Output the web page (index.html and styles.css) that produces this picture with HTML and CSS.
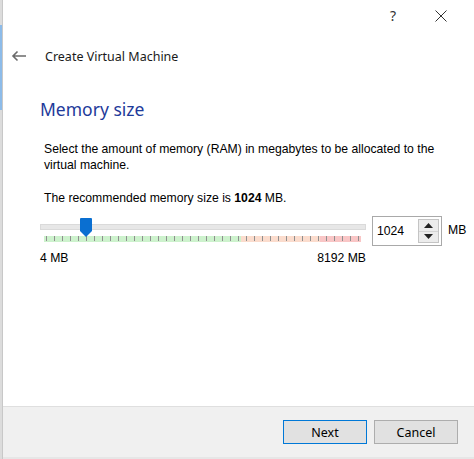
FILE: index.html
```html
<!DOCTYPE html>
<html>
<head>
<meta charset="utf-8">
<link rel="stylesheet" href="styles.css">
</head>
<body>
<div class="screen">
  <div class="behind"><div class="behind-blue"></div></div>
  <div class="dialog">
    <div class="titlebar">
      <span class="tb-help">?</span>
      <svg class="tb-close" width="12" height="12" viewBox="0 0 12 12"><path d="M0.5 0.5 L11.5 11.5 M11.5 0.5 L0.5 11.5" stroke="#333" stroke-width="1" fill="none"/></svg>
    </div>
    <div class="header">
      <svg class="back" width="16" height="12" viewBox="0 0 16 12"><path d="M15 6 H2 M6.5 1.5 L2 6 L6.5 10.5" stroke="#6b6b6b" stroke-width="1.6" fill="none"/></svg>
      <span class="header-title">Create Virtual Machine</span>
    </div>
    <div class="content">
      <h1 class="page-title">Memory size</h1>
      <p class="desc">Select the amount of memory (RAM) in megabytes to be allocated to the virtual machine.</p>
      <p class="desc rec">The recommended memory size is <b>1024</b> MB.</p>
      <div class="mem-row">
        <div class="slider">
          <div class="track"></div>
          <svg class="thumb" width="12" height="19" viewBox="0 0 12 19"><path d="M1 0 H11 Q12 0 12 1 V13 L6 19 L0 13 V1 Q0 0 1 0 Z" fill="#0a6fd1"/></svg>
          <div class="ticks"></div>
          <div class="labels"><span>4 MB</span><span>8192 MB</span></div>
        </div>
        <div class="spin">
          <span class="spin-val">1024</span>
          <div class="spin-btns">
            <div class="spin-btn"><svg width="9" height="5" viewBox="0 0 9 5"><path d="M0 5 L4.5 0 L9 5 Z" fill="#222"/></svg></div>
            <div class="spin-btn spin-down"><svg width="9" height="5" viewBox="0 0 9 5"><path d="M0 0 L4.5 5 L9 0 Z" fill="#222"/></svg></div>
          </div>
        </div>
        <span class="unit">MB</span>
      </div>
    </div>
    <div class="footer">
      <button class="btn btn-default">Next</button>
      <button class="btn">Cancel</button>
    </div>
  </div>
</div>
</body>
</html>
```
FILE: styles.css
```css
html, body {
  margin: 0;
  padding: 0;
  background: #ffffff;
}
.screen {
  display: flex;
  width: 474px;
  height: 459px;
  overflow: hidden;
}
.behind {
  width: 2px;
  background: #dcdcdc;
  border-right: 1px solid #c8c8c8;
  flex: none;
}
.behind-blue {
  margin-top: 25px;
  height: 85px;
  background: #8cbbe9;
}
.dialog {
  flex: 1;
  min-width: 0;
  display: flex;
  flex-direction: column;
  background: #fff;
}
.titlebar {
  height: 32px;
  display: flex;
  align-items: center;
  justify-content: flex-end;
  padding-right: 27px;
  font-family: "Noto Sans", sans-serif;
}
.tb-help {
  font-size: 14px;
  color: #333;
  margin-right: 39px;
  margin-top: -1px;
}
.header {
  height: 48px;
  display: flex;
  align-items: center;
  padding-left: 8px;
}
.back {
  margin-right: 18px;
}
.header-title {
  font-family: "Noto Sans", sans-serif;
  font-size: 12.5px;
  color: #1a1a1a;
}
.content {
  flex: 1;
  padding-left: 37px;
}
.page-title {
  margin: 17px 0 0 0;
  font-family: "Noto Sans", sans-serif;
  font-weight: normal;
  font-size: 17.5px;
  color: #1e3a9a;
  line-height: 24px;
}
.desc {
  margin: 20px 0 0 4px;
  width: 400px;
  font-family: "Liberation Sans", Arial, sans-serif;
  font-size: 12.2px;
  line-height: 16px;
  color: #000;
}
.desc.rec {
  margin-top: 17px;
}
.mem-row {
  display: flex;
  align-items: flex-start;
  margin-top: 10px;
}
.slider {
  position: relative;
  width: 326px;
  height: 50px;
  flex: none;
}
.track {
  margin-top: 8px;
  height: 6px;
  background: #e7e7e7;
  border: 1px solid #dadada;
  box-sizing: border-box;
}
.thumb {
  position: absolute;
  left: 40px;
  top: 2px;
}
.ticks {
  margin: 6px 0 0 4px;
  width: 317px;
  height: 6px;
  background:
    repeating-linear-gradient(to right, #8f8f8f 0, #8f8f8f 1px, transparent 1px, transparent 8px) 2px 0 / 313px 5px no-repeat,
    linear-gradient(to right, #cdf2cd 0, #cdf2cd 197px, #fbdccd 197px, #fbdccd 276px, #f9c6c6 276px, #f9c6c6 100%);
}
.labels {
  display: flex;
  justify-content: space-between;
  margin-top: 9px;
  font-family: "Liberation Sans", Arial, sans-serif;
  font-size: 12.2px;
  color: #000;
}
.spin {
  margin-left: 6px;
  width: 70px;
  height: 30px;
  flex: none;
  box-sizing: border-box;
  border: 1px solid #a9a9a9;
  display: flex;
  align-items: center;
  justify-content: space-between;
  padding: 1px 2px 1px 4px;
}
.spin-val {
  font-family: "Liberation Sans", Arial, sans-serif;
  font-size: 12.2px;
  color: #000;
}
.spin-btns {
  width: 21px;
  height: 24px;
  box-sizing: border-box;
  border: 1px solid #c4c4c4;
  background: #ececec;
  display: flex;
  flex-direction: column;
}
.spin-btn {
  flex: 1;
  display: flex;
  align-items: center;
  justify-content: center;
}
.spin-down {
  border-top: 1px solid #d4d4d4;
}
.unit {
  margin-left: 6px;
  margin-top: 7px;
  font-family: "Liberation Sans", Arial, sans-serif;
  font-size: 12.2px;
  color: #000;
}
.footer {
  height: 50px;
  background: #f0f0f0;
  border-top: 1px solid #dfdfdf;
  border-bottom: 2px solid #e6e6e6;
  display: flex;
  align-items: center;
  justify-content: flex-end;
  gap: 7px;
  padding-right: 16px;
}
.btn {
  width: 84px;
  height: 24px;
  box-sizing: border-box;
  background: #e1e1e1;
  border: 1px solid #adadad;
  font-family: "Noto Sans", sans-serif;
  font-size: 12.5px;
  color: #000;
  padding: 0;
}
.btn-default {
  border: 1px solid #0078d7;
}
```
